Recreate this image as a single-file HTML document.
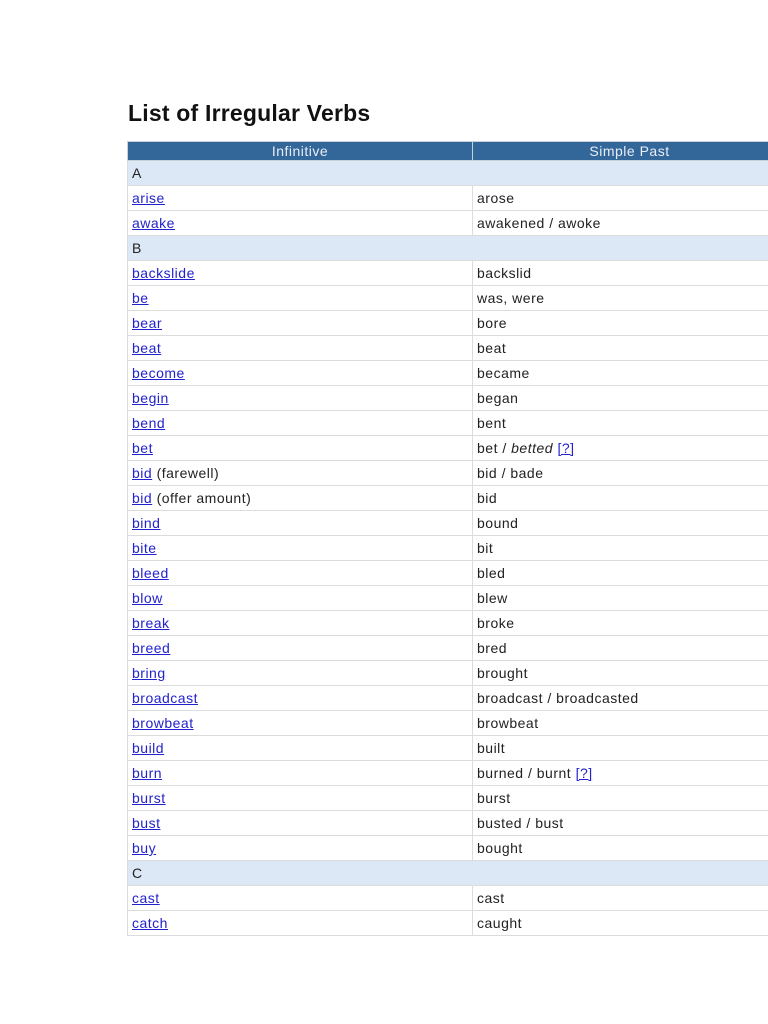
<!DOCTYPE html>
<html><head><meta charset="utf-8"><style>
body{margin:0;width:768px;height:1024px;background:#fff;position:relative;overflow:hidden;font-family:"Liberation Sans",Arial,sans-serif;}
h1{position:absolute;left:128px;top:100px;margin:0;font-size:23px;font-weight:bold;color:#111;letter-spacing:0.2px;}
table{position:absolute;left:127px;top:141px;width:660px;border-collapse:collapse;table-layout:fixed;font-size:14px;letter-spacing:0.5px;color:#222;}
td,th{border:1px solid #dcdcdc;padding:0 4px;height:24px;white-space:nowrap;overflow:hidden;}
th{background:#336699;color:#e8eef6;font-weight:normal;height:18px;border-color:#c8d0da;font-size:14px;}
tr.l td{background:#dce8f5;}
a{color:#2222cc;text-decoration:underline;}
col.a{width:345px}
</style></head><body>
<h1>List of Irregular Verbs</h1>
<table><colgroup><col class="a"><col></colgroup>
<tr><th>Infinitive</th><th>Simple Past</th></tr>
<tr class="l"><td colspan="2">A</td></tr>
<tr><td><a>arise</a></td><td>arose</td></tr>
<tr><td><a>awake</a></td><td>awakened / awoke</td></tr>
<tr class="l"><td colspan="2">B</td></tr>
<tr><td><a>backslide</a></td><td>backslid</td></tr>
<tr><td><a>be</a></td><td>was, were</td></tr>
<tr><td><a>bear</a></td><td>bore</td></tr>
<tr><td><a>beat</a></td><td>beat</td></tr>
<tr><td><a>become</a></td><td>became</td></tr>
<tr><td><a>begin</a></td><td>began</td></tr>
<tr><td><a>bend</a></td><td>bent</td></tr>
<tr><td><a>bet</a></td><td>bet / <i>betted</i> <a>[?]</a></td></tr>
<tr><td><a>bid</a> (farewell)</td><td>bid / bade</td></tr>
<tr><td><a>bid</a> (offer amount)</td><td>bid</td></tr>
<tr><td><a>bind</a></td><td>bound</td></tr>
<tr><td><a>bite</a></td><td>bit</td></tr>
<tr><td><a>bleed</a></td><td>bled</td></tr>
<tr><td><a>blow</a></td><td>blew</td></tr>
<tr><td><a>break</a></td><td>broke</td></tr>
<tr><td><a>breed</a></td><td>bred</td></tr>
<tr><td><a>bring</a></td><td>brought</td></tr>
<tr><td><a>broadcast</a></td><td>broadcast / broadcasted</td></tr>
<tr><td><a>browbeat</a></td><td>browbeat</td></tr>
<tr><td><a>build</a></td><td>built</td></tr>
<tr><td><a>burn</a></td><td>burned / burnt <a>[?]</a></td></tr>
<tr><td><a>burst</a></td><td>burst</td></tr>
<tr><td><a>bust</a></td><td>busted / bust</td></tr>
<tr><td><a>buy</a></td><td>bought</td></tr>
<tr class="l"><td colspan="2">C</td></tr>
<tr><td><a>cast</a></td><td>cast</td></tr>
<tr><td><a>catch</a></td><td>caught</td></tr>
</table>
</body></html>
